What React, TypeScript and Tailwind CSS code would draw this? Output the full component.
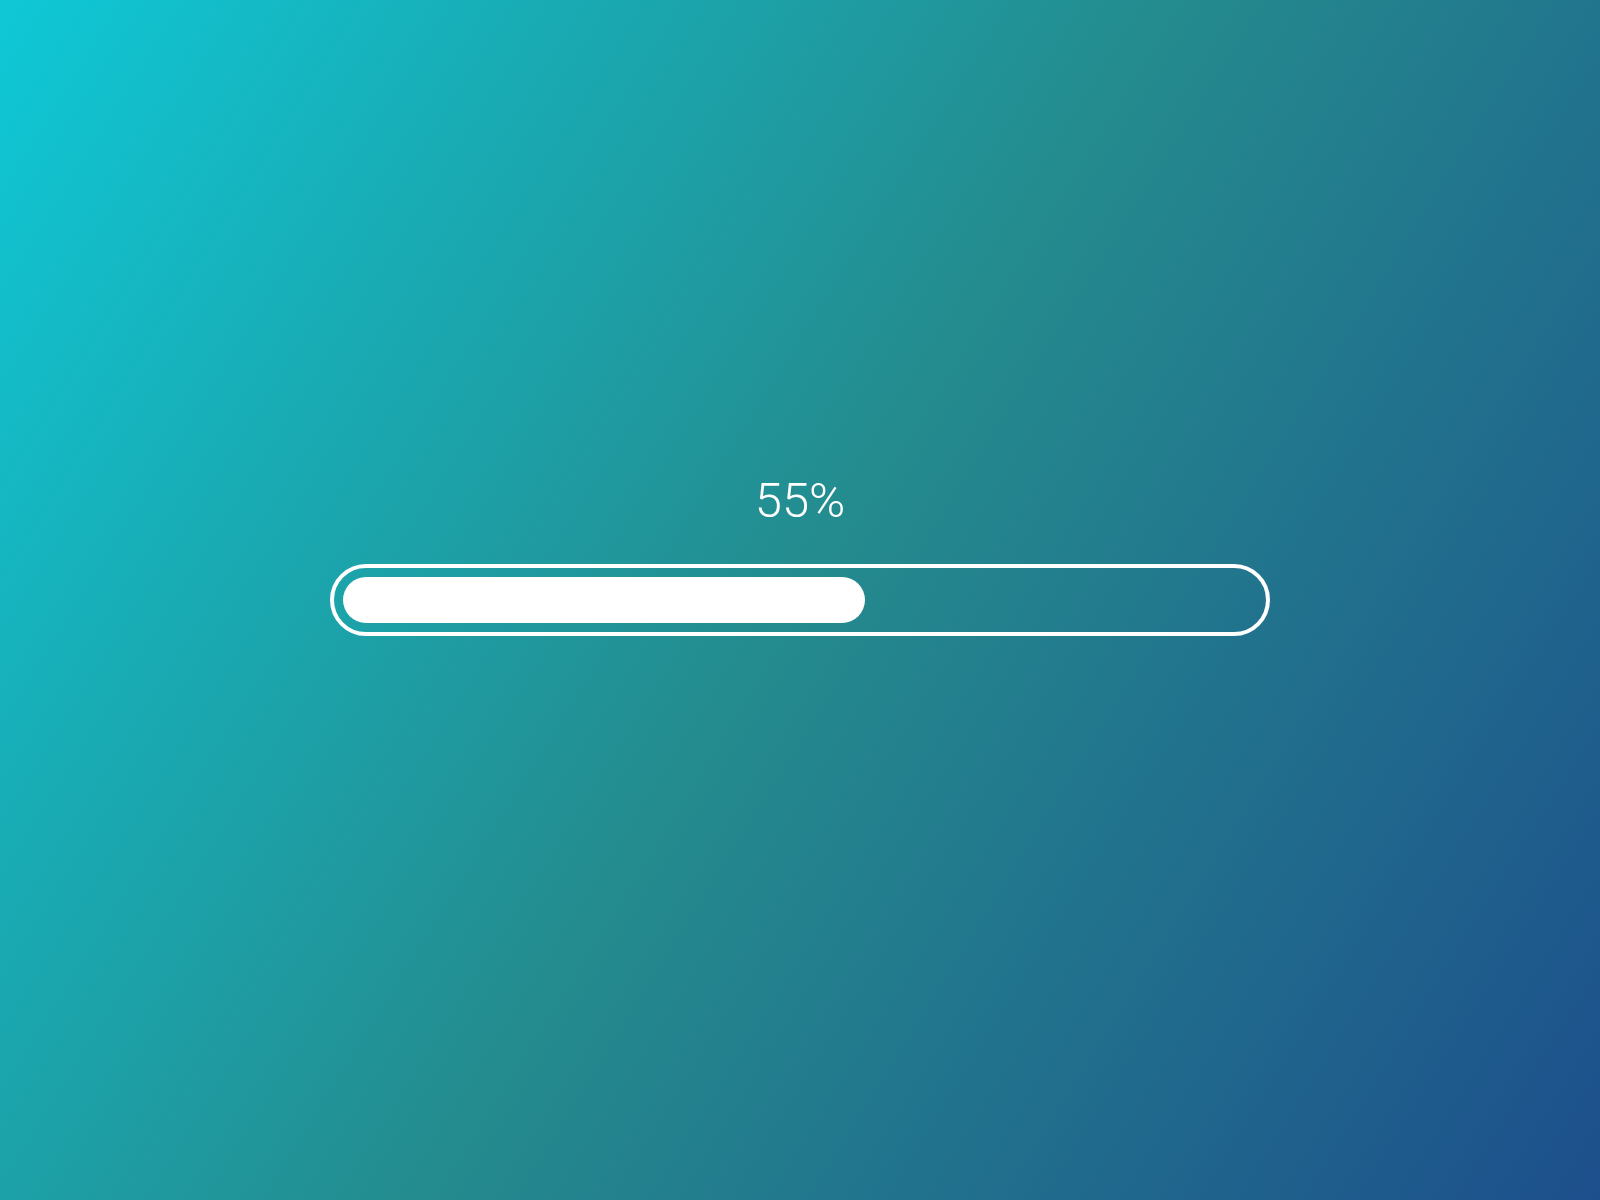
import React from "react";

const progress = 55;

export default function App() {
  return (
    <div className="flex min-h-screen w-full items-center justify-center bg-[linear-gradient(122deg,#0fc8d6_0%,#248b8e_50%,#1d4f8c_100%)]">
      <div className="flex flex-col items-center pb-[89px]">
        <div
          className="mb-[37px] h-[52px] text-[49px] leading-[52px] font-light text-white"
          style={{ fontFamily: 'Roboto, "Liberation Sans", Arial, sans-serif' }}
        >
          {progress}%
        </div>
        <div className="h-[72px] w-[940px] rounded-full border-[4px] border-white p-[9px]">
          {/* the extra 19px keeps the rounded cap past the value mark */}
          <div
            className="h-full rounded-full bg-white"
            style={{ width: `calc(${progress}% + 19px)` }}
          />
        </div>
      </div>
    </div>
  );
}
